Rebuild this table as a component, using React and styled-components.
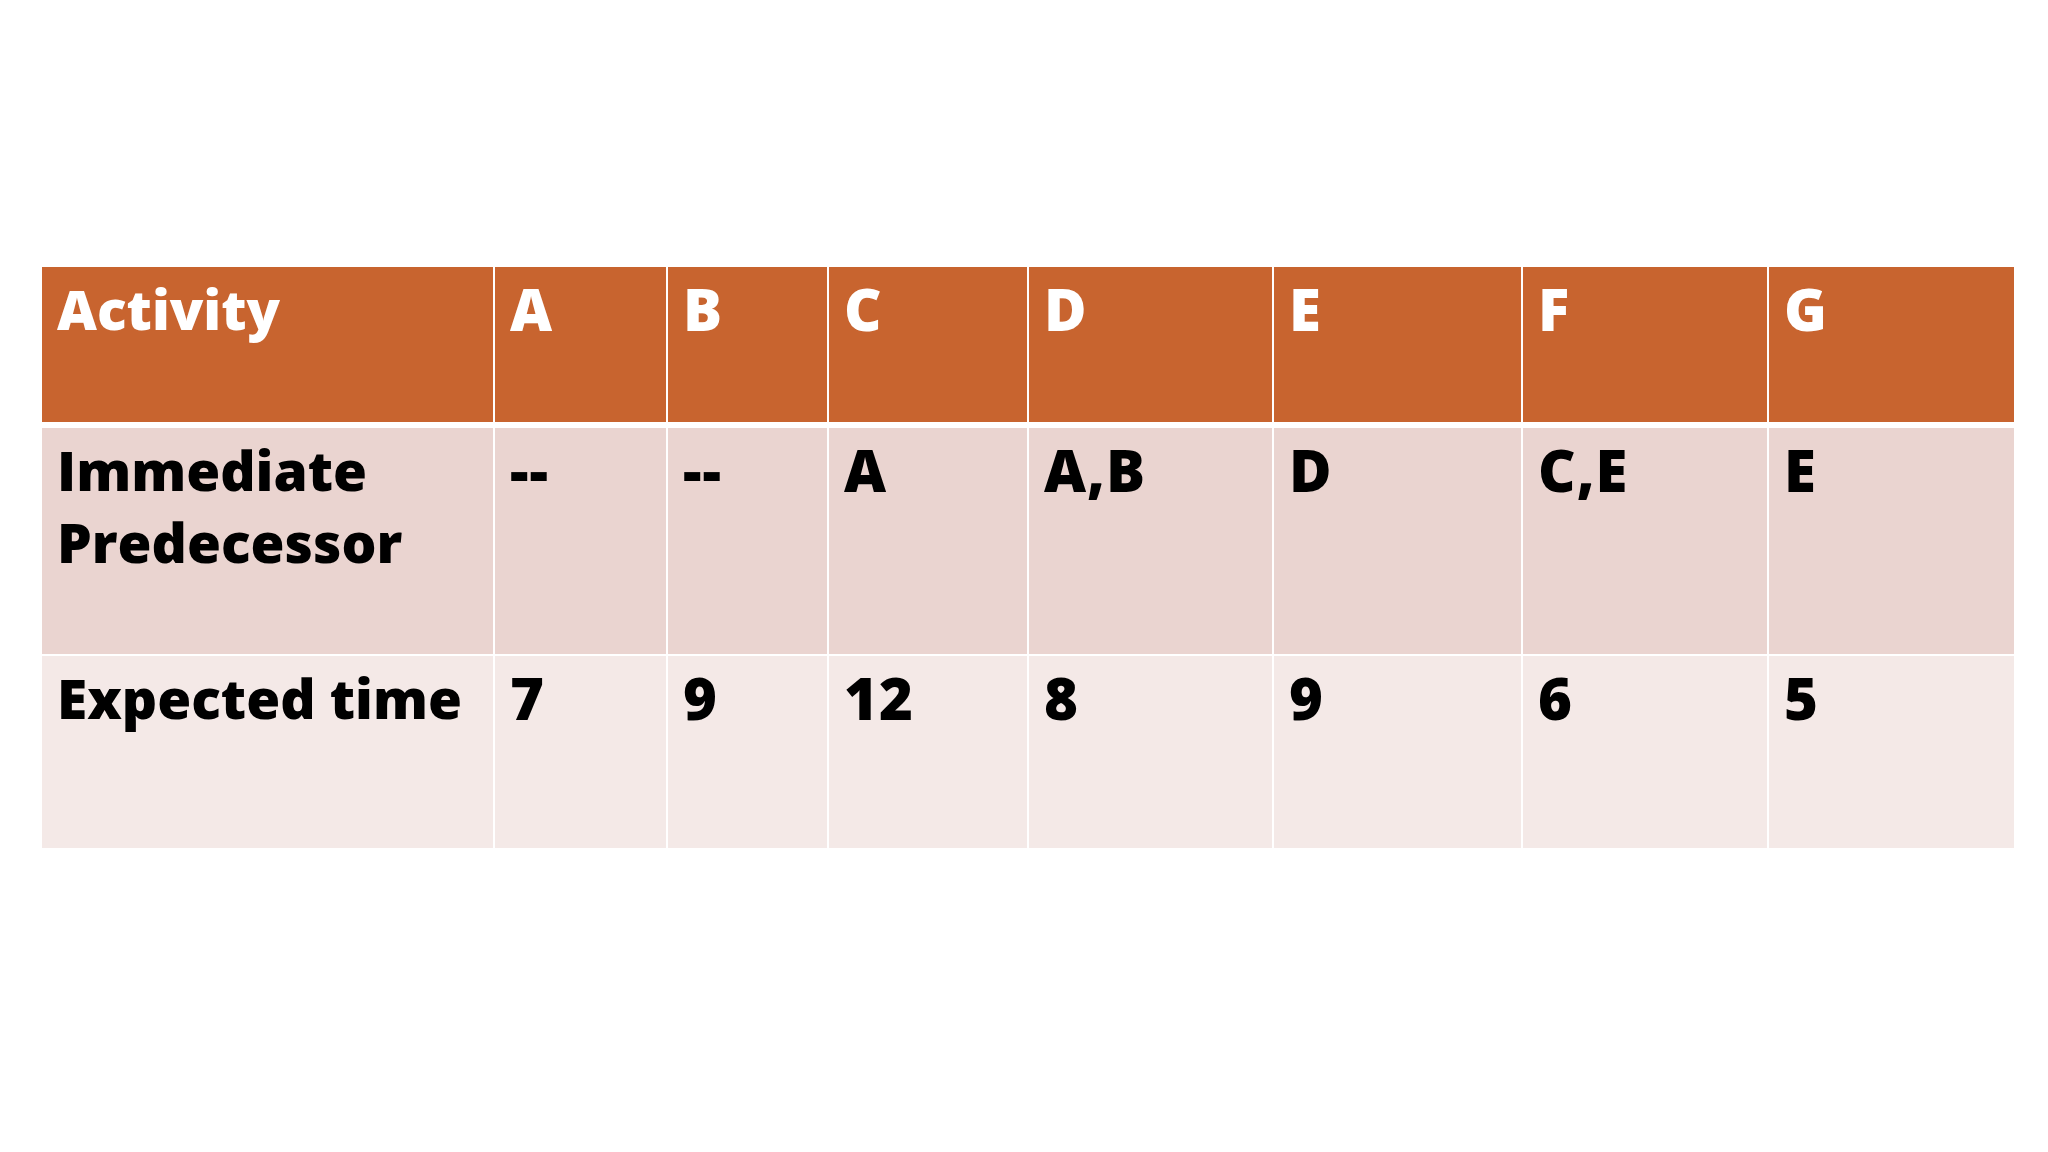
import React from 'react';
import styled, { createGlobalStyle } from 'styled-components';

const GlobalStyle = createGlobalStyle`
  html, body {
    margin: 0;
    padding: 0;
    background: #ffffff;
  }
  body {
    font-family: "Open Sans", "Liberation Sans", sans-serif;
  }
`;

const COLS = '451px 171px 159px 198px 243px 247px 244px 245px';

const rows = [
  {
    kind: 'head',
    cells: ['Activity', 'A', 'B', 'C', 'D', 'E', 'F', 'G'],
  },
  {
    kind: 'odd',
    cells: ['Immediate Predecessor', '--', '--', 'A', 'A,B', 'D', 'C,E', 'E'],
  },
  {
    kind: 'even',
    cells: ['Expected time', '7', '9', '12', '8', '9', '6', '5'],
  },
];

const App = () => {
  return (
    <>
      <GlobalStyle />
      <Slide>
        <Table>
          {rows.map((row) => (
            <Row key={row.kind} kind={row.kind}>
              {row.cells.map((c, i) => (
                <Cell key={i} kind={row.kind} label={i === 0}>
                  {c}
                </Cell>
              ))}
            </Row>
          ))}
        </Table>
      </Slide>
    </>
  );
};

export default App;

const Slide = styled.div`
  width: 2048px;
  height: 1152px;
  box-sizing: border-box;
  padding: 267px 34px 0 42px;
  background: #ffffff;
`;

const Table = styled.div`
  display: flex;
  flex-direction: column;
  width: 1972px;
`;

// 헤더 아래는 굵은 흰 선, 나머지 행은 얇은 선
const Row = styled.div`
  display: grid;
  grid-template-columns: ${COLS};
  column-gap: 2px;
  background: #ffffff;
  height: ${(p) => (p.kind === 'head' ? 155 : p.kind === 'odd' ? 226 : 192)}px;
  margin-bottom: ${(p) => (p.kind === 'head' ? 6 : p.kind === 'odd' ? 2 : 0)}px;
`;

const Cell = styled.div`
  box-sizing: border-box;
  padding: 6px 14px 0 15px;
  font-family: "Open Sans", "Liberation Sans", sans-serif;
  font-weight: 800;
  font-size: ${(p) => (p.label ? 55 : 58)}px;
  letter-spacing: ${(p) => (p.label ? 0 : 1)}px;
  line-height: 72px;
  color: ${(p) => (p.kind === 'head' ? '#ffffff' : '#000000')};
  background: ${(p) =>
    p.kind === 'head' ? '#c8642f' : p.kind === 'odd' ? '#ead4d0' : '#f4e9e7'};
`;
